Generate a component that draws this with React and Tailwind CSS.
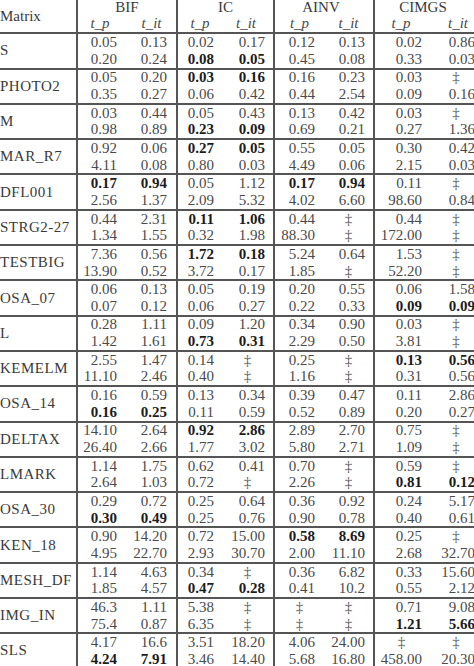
import React from "react";

// timing table: t_p / t_it per preconditioner, two rows per matrix
// "*" prefix = bold, "‡" = no result
const rows = [
  ["S", ["0.05", "0.13", "0.02", "0.17", "0.12", "0.13", "0.02", "0.86"], ["0.20", "0.24", "*0.08", "*0.05", "0.45", "0.08", "0.33", "0.03"]],
  ["PHOTO2", ["0.05", "0.20", "*0.03", "*0.16", "0.16", "0.23", "0.03", "‡"], ["0.35", "0.27", "0.06", "0.42", "0.44", "2.54", "0.09", "0.16"]],
  ["M", ["0.03", "0.44", "0.05", "0.43", "0.13", "0.42", "0.03", "‡"], ["0.98", "0.89", "*0.23", "*0.09", "0.69", "0.21", "0.27", "1.36"]],
  ["MAR_R7", ["0.92", "0.06", "*0.27", "*0.05", "0.55", "0.05", "0.30", "0.42"], ["4.11", "0.08", "0.80", "0.03", "4.49", "0.06", "2.15", "0.03"]],
  ["DFL001", ["*0.17", "*0.94", "0.05", "1.12", "*0.17", "*0.94", "0.11", "‡"], ["2.56", "1.37", "2.09", "5.32", "4.02", "6.60", "98.60", "0.84"]],
  ["STRG2-27", ["0.44", "2.31", "*0.11", "*1.06", "0.44", "‡", "0.44", "‡"], ["1.34", "1.55", "0.32", "1.98", "88.30", "‡", "172.00", "‡"]],
  ["TESTBIG", ["7.36", "0.56", "*1.72", "*0.18", "5.24", "0.64", "1.53", "‡"], ["13.90", "0.52", "3.72", "0.17", "1.85", "‡", "52.20", "‡"]],
  ["OSA_07", ["0.06", "0.13", "0.05", "0.19", "0.20", "0.55", "0.06", "1.58"], ["0.07", "0.12", "0.06", "0.27", "0.22", "0.33", "*0.09", "*0.09"]],
  ["L", ["0.28", "1.11", "0.09", "1.20", "0.34", "0.90", "0.03", "‡"], ["1.42", "1.61", "*0.73", "*0.31", "2.29", "0.50", "3.81", "‡"]],
  ["KEMELM", ["2.55", "1.47", "0.14", "‡", "0.25", "‡", "*0.13", "*0.56"], ["11.10", "2.46", "0.40", "‡", "1.16", "‡", "0.31", "0.56"]],
  ["OSA_14", ["0.16", "0.59", "0.13", "0.34", "0.39", "0.47", "0.11", "2.86"], ["*0.16", "*0.25", "0.11", "0.59", "0.52", "0.89", "0.20", "0.27"]],
  ["DELTAX", ["14.10", "2.64", "*0.92", "*2.86", "2.89", "2.70", "0.75", "‡"], ["26.40", "2.66", "1.77", "3.02", "5.80", "2.71", "1.09", "‡"]],
  ["LMARK", ["1.14", "1.75", "0.62", "0.41", "0.70", "‡", "0.59", "‡"], ["2.64", "1.03", "0.72", "‡", "2.26", "‡", "*0.81", "*0.12"]],
  ["OSA_30", ["0.29", "0.72", "0.25", "0.64", "0.36", "0.92", "0.24", "5.17"], ["*0.30", "*0.49", "0.25", "0.76", "0.90", "0.78", "0.40", "0.61"]],
  ["KEN_18", ["0.90", "14.20", "0.72", "15.00", "*0.58", "*8.69", "0.25", "‡"], ["4.95", "22.70", "2.93", "30.70", "2.00", "11.10", "2.68", "32.70"]],
  ["MESH_DF", ["1.14", "4.63", "0.34", "‡", "0.36", "6.82", "0.33", "15.60"], ["1.85", "4.57", "*0.47", "*0.28", "0.41", "10.2", "0.55", "2.12"]],
  ["IMG_IN", ["46.3", "1.11", "5.38", "‡", "‡", "‡", "0.71", "9.08"], ["75.4", "0.87", "6.35", "‡", "‡", "‡", "*1.21", "*5.66"]],
  ["SLS", ["4.17", "16.6", "3.51", "18.20", "4.06", "24.00", "‡", "‡"], ["*4.24", "*7.91", "3.46", "14.40", "5.68", "16.80", "458.00", "20.30"]],
];

const groups = [
  { name: "BIF", w: "w-[100px]", title: "pr-0", cells: ["w-[49px] pr-[10px]", "w-[49px] pr-[9px]"], hdr: ["pr-[5px]", "pr-0"] },
  { name: "IC", w: "w-[97px]", title: "pr-0", cells: ["w-[44px] pr-[8px]", "w-[51px] pr-[8px]"], hdr: ["pr-0", "pr-[3px]"] },
  { name: "AINV", w: "w-[100px]", title: "pr-[6px]", cells: ["w-[49px] pr-[9px]", "w-[49px] pr-[8px]"], hdr: ["pr-0", "pr-0"] },
  { name: "CIMGS", w: "w-[111px]", title: "pr-[13px]", cells: ["w-[53px] pr-[6px]", "w-[56px] pr-[9px]"], hdr: ["pr-[1px]", "pl-[4px]"] },
];

function Cell({ v, cls }) {
  if (v === "‡") {
    return <div className={`${cls.split(" ")[0]} shrink-0 flex justify-center text-[#555]`}>‡</div>;
  }
  const bold = v.startsWith("*");
  return (
    <div className={`${cls} shrink-0 flex justify-end`}>
      <span className={bold ? "font-bold text-[#1c1c1c]" : "text-[#4a4a4a]"}>{bold ? v.slice(1) : v}</span>
    </div>
  );
}

function Group({ g, gi, a, b }) {
  return (
    <div className={`${g.w} shrink-0 border-l-2 border-[#555] flex flex-col`}>
      {[a, b].map((line, li) => (
        <div key={li} className="h-[16.65px] flex items-center">
          <Cell v={line[gi * 2]} cls={g.cells[0]} />
          <Cell v={line[gi * 2 + 1]} cls={g.cells[1]} />
        </div>
      ))}
    </div>
  );
}

export default function App() {
  return (
    <div className="w-[474px] h-[666px] overflow-hidden bg-white font-['Liberation_Serif',serif] text-[15px] leading-none text-[#3a3a3a]">
      <div className="flex w-[600px]">
        <div className="w-[76px] shrink-0 h-[32.3px] flex items-center">Matrix</div>
        {groups.map((g) => (
          <div key={g.name} className={`${g.w} shrink-0 border-l-2 border-[#555] flex flex-col`}>
            <div className={`h-[14.5px] flex items-end justify-center ${g.title}`}>{g.name}</div>
            <div className="h-[17.8px] flex items-center">
              {["t_p", "t_it"].map((t, i) => (
                <div key={t} className={`${g.cells[i].split(" ")[0]} shrink-0 flex justify-center italic text-[#4a4a4a] ${g.hdr[i]}`}>
                  {t}
                </div>
              ))}
            </div>
          </div>
        ))}
      </div>

      {rows.map(([name, a, b]) => (
        <div key={name} className="flex w-[600px] h-[35.3px] border-t-2 border-[#555]">
          <div className="w-[76px] shrink-0 flex items-center tracking-[0.5px]">{name}</div>
          {groups.map((g, gi) => (
            <Group key={g.name} g={g} gi={gi} a={a} b={b} />
          ))}
        </div>
      ))}
    </div>
  );
}
